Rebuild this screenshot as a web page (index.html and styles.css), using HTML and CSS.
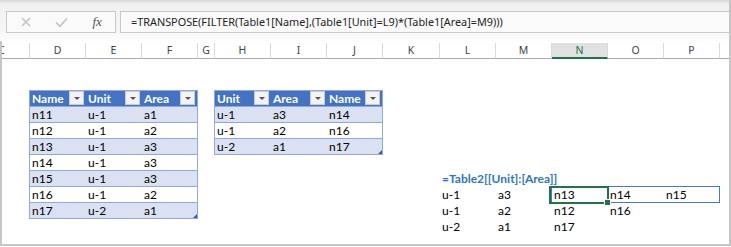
FILE: index.html
```html
<!DOCTYPE html>
<html lang="en">
<head>
    <meta charset="UTF-8">
    <meta name="viewport" content="width=device-width, initial-scale=1.0">
    <title>Spill with TRANSPOSE and FILTER</title>
    <link rel="stylesheet" href="styles.css">
</head>
<body>
    <div class="window">
        <div class="formula-bar">
            <div class="name-tools">
                <span class="tool">
                    <svg width="10" height="10" viewBox="0 0 10 10"><path d="M1 1 L9 9 M9 1 L1 9" stroke="#c2c2c2" stroke-width="1.5" fill="none"/></svg>
                </span>
                <span class="tool">
                    <svg width="13" height="11" viewBox="0 0 13 11"><path d="M1 5.5 L4.8 9.3 L12 1.5" stroke="#c2c2c2" stroke-width="1.7" fill="none"/></svg>
                </span>
                <span class="tool fx">fx</span>
            </div>
            <div class="formula">=TRANSPOSE(FILTER(Table1[Name],(Table1[Unit]=L9)*(Table1[Area]=M9)))</div>
        </div>

        <div class="sheet">
            <div class="cols col-heads">
                <div class="ch cut">C</div>
                <div class="ch">D</div>
                <div class="ch">E</div>
                <div class="ch">F</div>
                <div class="ch">G</div>
                <div class="ch">H</div>
                <div class="ch">I</div>
                <div class="ch">J</div>
                <div class="ch">K</div>
                <div class="ch">L</div>
                <div class="ch">M</div>
                <div class="ch sel">N</div>
                <div class="ch">O</div>
                <div class="ch">P</div>
                <div class="ch last"></div>
            </div>

            <div class="cols cells">
                <!-- Table1 in D3:F10 -->
                <div class="xtable t1">
                    <div class="xrow head">
                        <div>Name<i class="dd"></i></div>
                        <div>Unit<i class="dd"></i></div>
                        <div>Area<i class="dd"></i></div>
                    </div>
                    <div class="xrow band"><div>n11</div><div>u-1</div><div>a1</div></div>
                    <div class="xrow"><div>n12</div><div>u-1</div><div>a2</div></div>
                    <div class="xrow band"><div>n13</div><div>u-1</div><div>a3</div></div>
                    <div class="xrow"><div>n14</div><div>u-1</div><div>a3</div></div>
                    <div class="xrow band"><div>n15</div><div>u-1</div><div>a3</div></div>
                    <div class="xrow"><div>n16</div><div>u-1</div><div>a2</div></div>
                    <div class="xrow band"><div>n17</div><div>u-2</div><div>a1</div></div>
                </div>

                <!-- Table2 in H3:J6 -->
                <div class="xtable t2">
                    <div class="xrow head">
                        <div>Unit<i class="dd"></i></div>
                        <div>Area<i class="dd"></i></div>
                        <div>Name<i class="dd"></i></div>
                    </div>
                    <div class="xrow band"><div>u-1</div><div>a3</div><div>n14</div></div>
                    <div class="xrow"><div>u-1</div><div>a2</div><div>n16</div></div>
                    <div class="xrow band"><div>u-2</div><div>a1</div><div>n17</div></div>
                </div>

                <!-- L8:P11 -->
                <div class="spill-area">
                    <div class="cell ref">=Table2[[Unit]:[Area]]</div>
                    <div class="cell">u-1</div><div class="cell">a3</div><div class="cell">n13</div><div class="cell">n14</div><div class="cell">n15</div>
                    <div class="cell">u-1</div><div class="cell">a2</div><div class="cell">n12</div><div class="cell">n16</div><div class="cell"></div>
                    <div class="cell">u-2</div><div class="cell">a1</div><div class="cell">n17</div><div class="cell"></div><div class="cell"></div>
                    <div class="spill-box"></div>
                    <div class="active-cell"></div>
                </div>
            </div>
        </div>
    </div>
</body>
</html>
```

FILE: styles.css
```css
body {
    margin: 0;
    background-color: #fff;
    font-family: Lato, "Liberation Sans", sans-serif;
}
.window {
    width: 731px;
    height: 246px;
    box-sizing: border-box;
    border-right: 2px solid #c6c6c6;
    display: flex;
    flex-direction: column;
    overflow: hidden;
}

/* formula bar */
.formula-bar {
    height: 41px;
    flex: none;
    box-sizing: border-box;
    padding: 11px 0 0 6px;
    display: flex;
    align-items: flex-start;
    background: linear-gradient(#d6d6d6 0, #f1f1f1 4px, #f5f5f5 30px, #fdfdfd 41px);
}
.name-tools {
    width: 110px;
    height: 22px;
    box-sizing: border-box;
    border: 1px solid #c9c9c9;
    background-color: #fafafa;
    display: flex;
    align-items: center;
    padding-left: 1px;
}
.tool {
    width: 36px;
    display: flex;
    justify-content: center;
    align-items: center;
}
.fx {
    font-family: "Liberation Serif", serif;
    font-style: italic;
    font-size: 13px;
    color: #505050;
    line-height: 14px;
}
.formula {
    flex: 1;
    margin-left: 4px;
    height: 22px;
    box-sizing: border-box;
    border: 1px solid #c9c9c9;
    border-right: none;
    background-color: #fafafa;
    padding-left: 10px;
    font-family: "Noto Sans", sans-serif;
    font-size: 10.85px;
    line-height: 20px;
    color: #222;
    white-space: nowrap;
}

/* sheet */
.sheet {
    flex: 1;
    border-left: 2px solid #c6c6c6;
    border-bottom: 2px solid #c6c6c6;
    overflow: hidden;
}
.cols {
    display: grid;
    grid-template-columns: 28px 56px 56px 56px 17px 56px 56px 56px 57px 56px 56px 56px 56px 56px 1fr;
}
.col-heads {
    height: 18px;
}
.ch {
    margin-top: 2px;
    height: 16px;
    box-sizing: border-box;
    border-right: 1px solid #dadada;
    border-bottom: 1px solid #ababab;
    font-family: "Noto Sans", sans-serif;
    font-size: 10.5px;
    line-height: 15px;
    color: #444;
    text-align: center;
    overflow: hidden;
}
.ch.cut {
    text-align: left;
    text-indent: -4px;
}
.ch.last {
    border-right: none;
}
.ch.sel {
    background-color: #e1e1e1;
    border-bottom: 2px solid #217346;
    color: #217346;
}

.cells {
    grid-template-rows: repeat(12, 16px);
    font-size: 12px;
    color: #000;
}

/* excel tables */
.xtable {
    position: relative;
    align-self: start;
    justify-self: start;
    width: 169px;
    margin: -1px 0 0 -1px;
    box-sizing: border-box;
    border: 1px solid #8ea9db;
}
.t1 {
    grid-column: 2 / 5;
    grid-row: 3 / 11;
}
.t2 {
    grid-column: 6 / 9;
    grid-row: 3 / 7;
}
.xtable::after {
    content: "";
    position: absolute;
    right: 0;
    bottom: 0;
    border-left: 4px solid transparent;
    border-bottom: 4px solid #3d58a8;
}
.xrow {
    display: grid;
    grid-template-columns: 56px 56px 55px;
    height: 16px;
    box-sizing: border-box;
    border-top: 1px solid #8ea9db;
}
.xrow > div {
    position: relative;
    padding-left: 2px;
    line-height: 15px;
    white-space: nowrap;
}
.xrow.head {
    height: 15px;
    border-top: none;
    background-color: #4472c4;
    color: #fff;
    font-weight: bold;
}
.band {
    background-color: #d9e1f2;
}
.dd {
    position: absolute;
    top: 0;
    right: 2px;
    width: 15px;
    height: 14px;
    box-sizing: border-box;
    border: 1px solid #c5ccd8;
    background-color: #f3f3f3;
}
.dd::after {
    content: "";
    position: absolute;
    left: 4px;
    top: 5px;
    border-left: 3px solid transparent;
    border-right: 3px solid transparent;
    border-top: 3px solid #555;
}

/* spilled results L8:P11 */
.spill-area {
    grid-column: 10 / 15;
    grid-row: 8 / 12;
    position: relative;
    display: grid;
    grid-template-columns: repeat(5, 56px);
    grid-template-rows: repeat(4, 16px);
}
.cell {
    padding-left: 2px;
    line-height: 15px;
    white-space: nowrap;
}
.cell.ref {
    grid-column: 1 / -1;
    color: #2e75c8;
    font-weight: bold;
}
.spill-box {
    position: absolute;
    left: 111px;
    top: 15px;
    width: 169px;
    height: 17px;
    box-sizing: border-box;
    border: 1px solid #3f7bd0;
}
.active-cell {
    position: absolute;
    left: 109px;
    top: 15px;
    width: 60px;
    height: 18px;
    box-sizing: border-box;
    border: 2px solid #217346;
}
.active-cell::after {
    content: "";
    position: absolute;
    right: -4px;
    bottom: -4px;
    width: 5px;
    height: 5px;
    background-color: #217346;
    border: 1px solid #fff;
}
```
